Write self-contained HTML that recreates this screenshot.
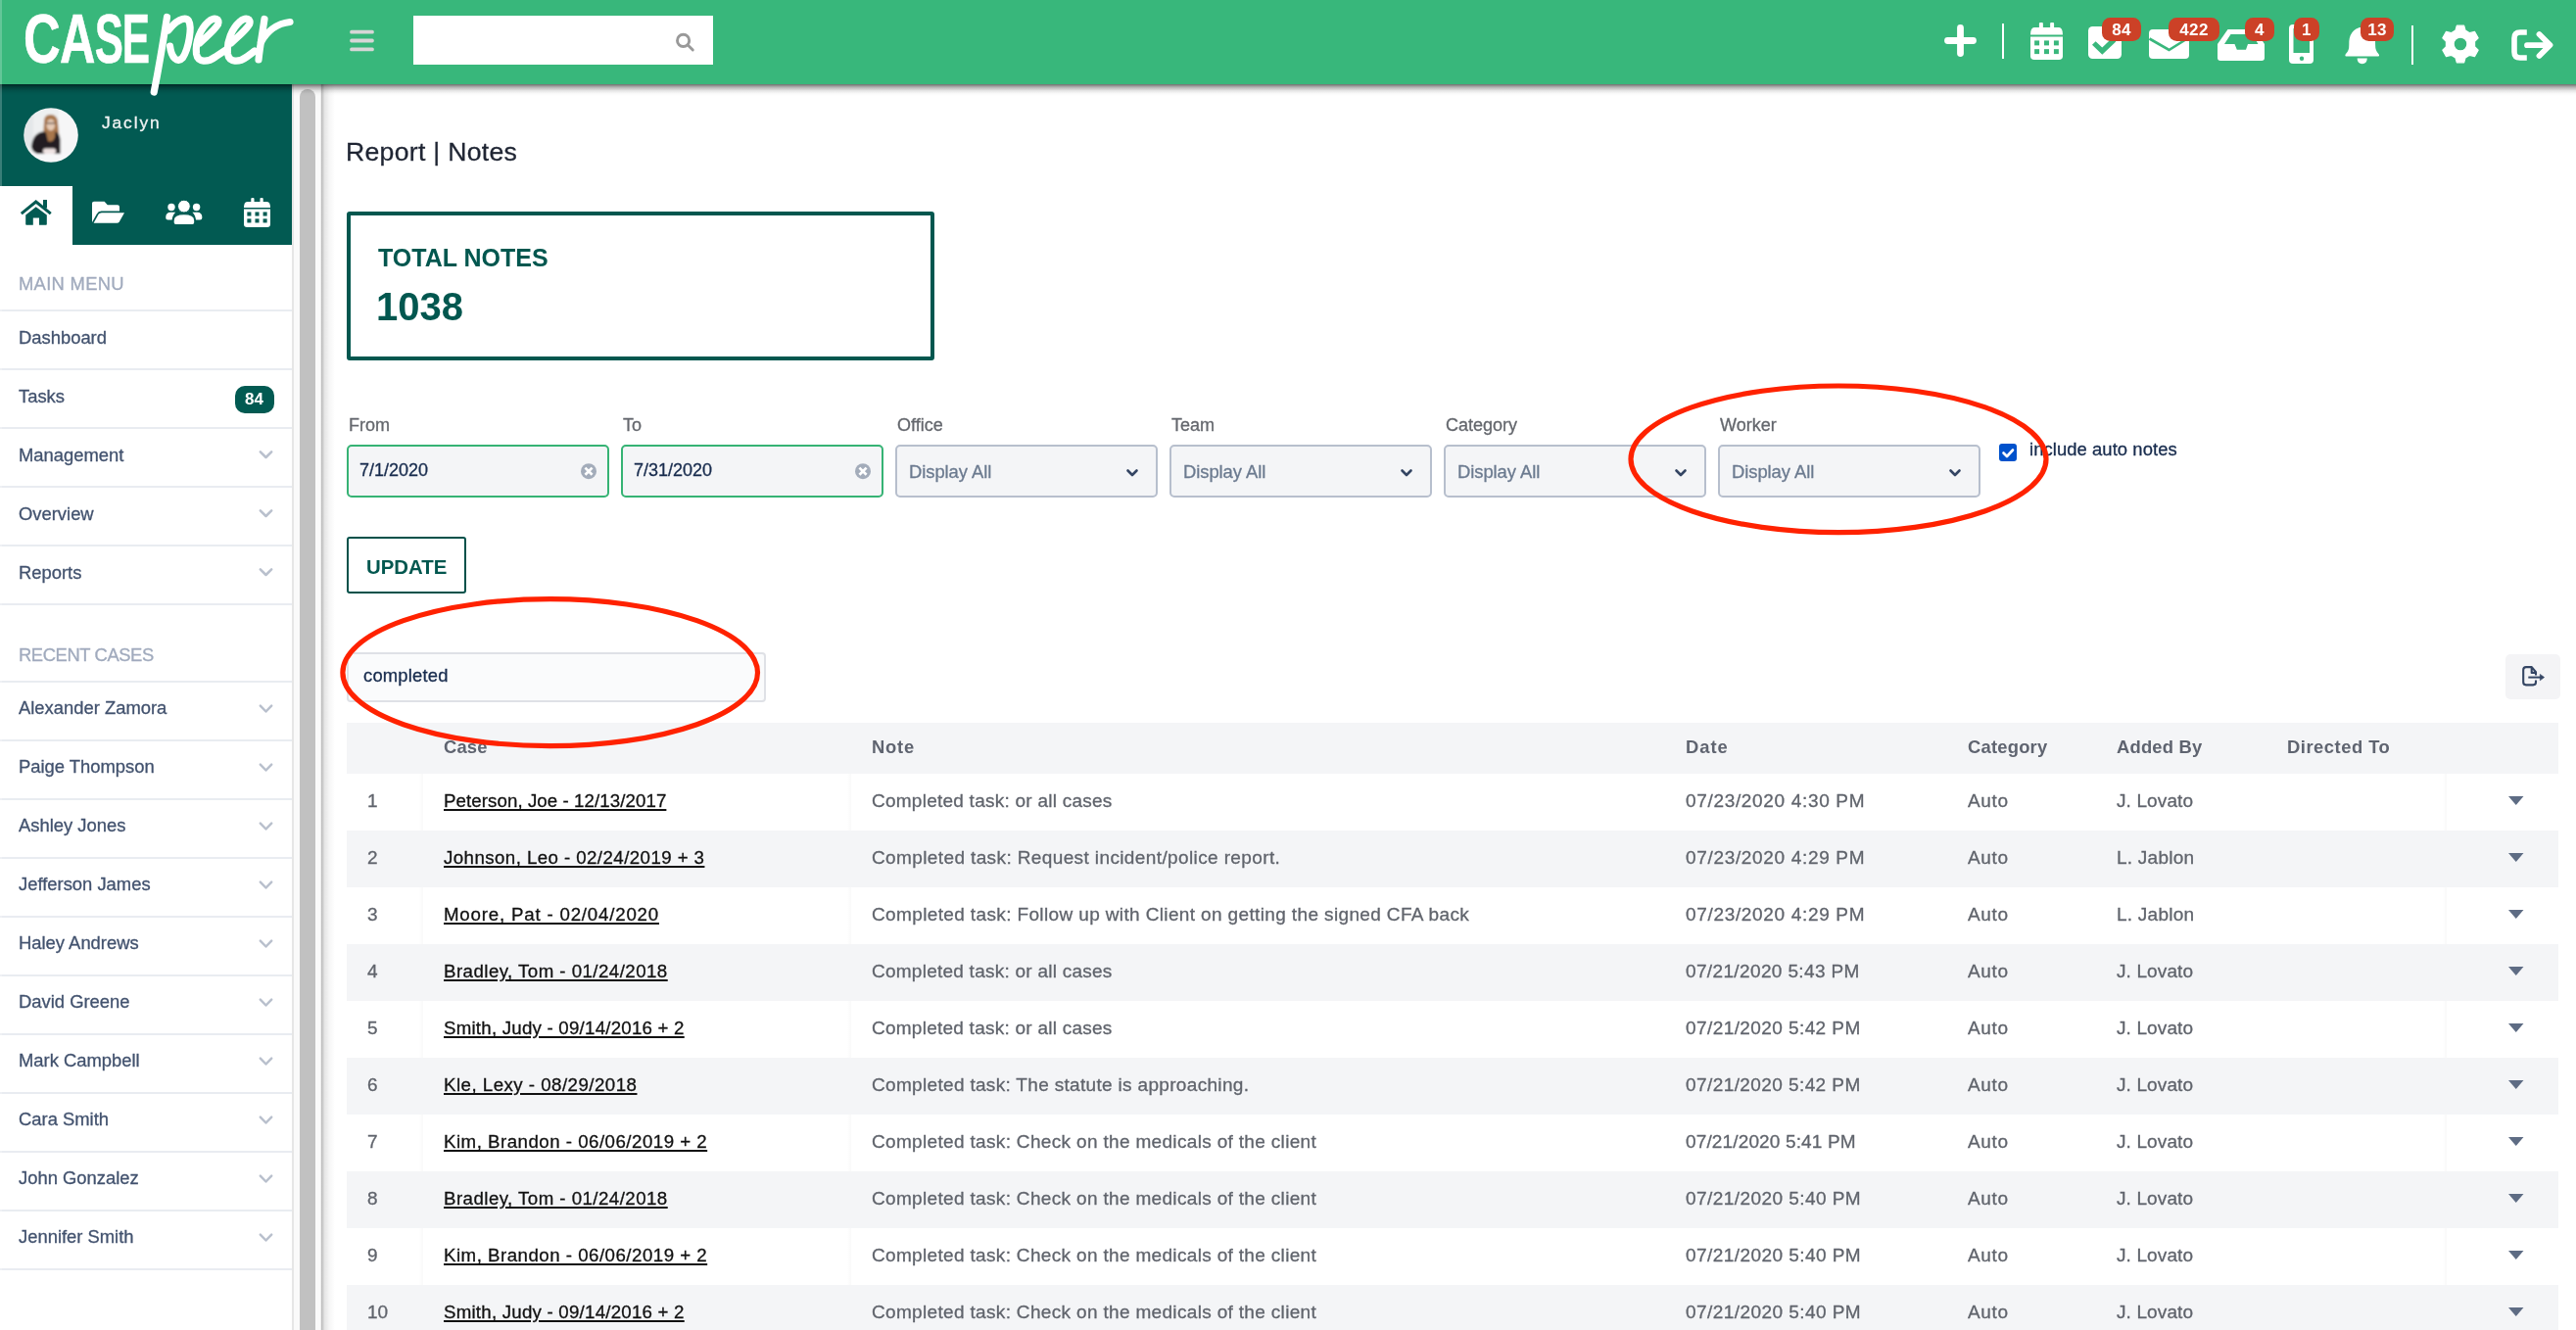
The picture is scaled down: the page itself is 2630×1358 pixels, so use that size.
<!DOCTYPE html><html><head><meta charset="utf-8"><style>
*{margin:0;padding:0;box-sizing:border-box}
html,body{width:2630px;height:1358px;overflow:hidden;background:#fff;font-family:"Liberation Sans",sans-serif}
.t{position:absolute;line-height:1;white-space:nowrap;will-change:transform}
.r{position:absolute}
svg{position:absolute;overflow:visible}
</style></head><body><div class="r" style="left:328px;top:86px;width:2302px;height:1272px;background:#fff"></div>
<div class="r" style="left:328px;top:86px;width:14px;height:1272px;background:linear-gradient(to right,#b9b9b9,#e6e6e6 25%,#f6f6f6 60%,rgba(255,255,255,0))"></div>
<div class="r" style="left:298px;top:86px;width:30px;height:1272px;background:#fafafa;border-left:2px solid #e6e6e6;border-right:1px solid #eeeeee"></div>
<div class="r" style="left:306px;top:91px;width:16px;height:1300px;background:#c1c1c1;border-radius:8px 8px 0 0"></div>
<div class="r" style="left:0px;top:86px;width:298px;height:1272px;background:#fff"></div>
<div class="r" style="left:0px;top:86px;width:298px;height:164px;background:#025a52"></div>
<div class="r" style="left:0px;top:190px;width:74px;height:60px;background:#fff"></div>
<div class="t" style="left:103.8px;top:117.3px;font-size:17.4px;color:#f2f4f4;-webkit-text-stroke:0.3px currentColor;letter-spacing:1.876px;">Jaclyn</div>
<div class="t" style="left:19.4px;top:280.6px;font-size:18.4px;color:#a0aabd;-webkit-text-stroke:0.3px currentColor;letter-spacing:0.293px;">MAIN MENU</div>
<div class="t" style="left:19.0px;top:336.2px;font-size:18.4px;color:#42526e;-webkit-text-stroke:0.3px currentColor;">Dashboard</div>
<div class="t" style="left:19.0px;top:396.2px;font-size:18.4px;color:#42526e;-webkit-text-stroke:0.3px currentColor;">Tasks</div>
<div class="t" style="left:19.0px;top:456.2px;font-size:18.4px;color:#42526e;-webkit-text-stroke:0.3px currentColor;">Management</div>
<div class="t" style="left:19.0px;top:516.2px;font-size:18.4px;color:#42526e;-webkit-text-stroke:0.3px currentColor;">Overview</div>
<div class="t" style="left:19.0px;top:576.2px;font-size:18.4px;color:#42526e;-webkit-text-stroke:0.3px currentColor;">Reports</div>
<div class="r" style="left:0px;top:316px;width:298px;height:2px;background:#e9ecf1"></div>
<div class="r" style="left:0px;top:376px;width:298px;height:2px;background:#e9ecf1"></div>
<div class="r" style="left:0px;top:436px;width:298px;height:2px;background:#e9ecf1"></div>
<div class="r" style="left:0px;top:496px;width:298px;height:2px;background:#e9ecf1"></div>
<div class="r" style="left:0px;top:556px;width:298px;height:2px;background:#e9ecf1"></div>
<div class="r" style="left:0px;top:616px;width:298px;height:2px;background:#e9ecf1"></div>
<div class="r" style="left:240px;top:394px;width:40px;height:28px;background:#025a52;border-radius:10px"></div>
<div class="t" style="left:250.0px;top:398.6px;font-size:17px;color:#ffffff;font-weight:700;">84</div>
<div class="t" style="left:19.4px;top:660.4px;font-size:18.4px;color:#a0aabd;-webkit-text-stroke:0.3px currentColor;letter-spacing:-0.409px;">RECENT CASES</div>
<div class="t" style="left:19.0px;top:714.2px;font-size:18.4px;color:#42526e;-webkit-text-stroke:0.3px currentColor;">Alexander Zamora</div>
<div class="t" style="left:19.0px;top:774.2px;font-size:18.4px;color:#42526e;-webkit-text-stroke:0.3px currentColor;">Paige Thompson</div>
<div class="t" style="left:19.0px;top:834.2px;font-size:18.4px;color:#42526e;-webkit-text-stroke:0.3px currentColor;">Ashley Jones</div>
<div class="t" style="left:19.0px;top:894.2px;font-size:18.4px;color:#42526e;-webkit-text-stroke:0.3px currentColor;">Jefferson James</div>
<div class="t" style="left:19.0px;top:954.2px;font-size:18.4px;color:#42526e;-webkit-text-stroke:0.3px currentColor;">Haley Andrews</div>
<div class="t" style="left:19.0px;top:1014.2px;font-size:18.4px;color:#42526e;-webkit-text-stroke:0.3px currentColor;">David Greene</div>
<div class="t" style="left:19.0px;top:1074.2px;font-size:18.4px;color:#42526e;-webkit-text-stroke:0.3px currentColor;">Mark Campbell</div>
<div class="t" style="left:19.0px;top:1134.2px;font-size:18.4px;color:#42526e;-webkit-text-stroke:0.3px currentColor;">Cara Smith</div>
<div class="t" style="left:19.0px;top:1194.2px;font-size:18.4px;color:#42526e;-webkit-text-stroke:0.3px currentColor;">John Gonzalez</div>
<div class="t" style="left:19.0px;top:1254.2px;font-size:18.4px;color:#42526e;-webkit-text-stroke:0.3px currentColor;">Jennifer Smith</div>
<div class="r" style="left:0px;top:695px;width:298px;height:2px;background:#e9ecf1"></div>
<div class="r" style="left:0px;top:755px;width:298px;height:2px;background:#e9ecf1"></div>
<div class="r" style="left:0px;top:815px;width:298px;height:2px;background:#e9ecf1"></div>
<div class="r" style="left:0px;top:875px;width:298px;height:2px;background:#e9ecf1"></div>
<div class="r" style="left:0px;top:935px;width:298px;height:2px;background:#e9ecf1"></div>
<div class="r" style="left:0px;top:995px;width:298px;height:2px;background:#e9ecf1"></div>
<div class="r" style="left:0px;top:1055px;width:298px;height:2px;background:#e9ecf1"></div>
<div class="r" style="left:0px;top:1115px;width:298px;height:2px;background:#e9ecf1"></div>
<div class="r" style="left:0px;top:1175px;width:298px;height:2px;background:#e9ecf1"></div>
<div class="r" style="left:0px;top:1235px;width:298px;height:2px;background:#e9ecf1"></div>
<div class="r" style="left:0px;top:1295px;width:298px;height:2px;background:#e9ecf1"></div>
<div class="r" style="left:0px;top:0px;width:2630px;height:86px;background:#38b77b"></div>
<div class="r" style="left:0px;top:86px;width:2630px;height:12px;background:linear-gradient(to bottom,rgba(0,0,0,.56),rgba(0,0,0,.3) 25%,rgba(0,0,0,.1) 55%,rgba(0,0,0,.02) 80%,rgba(0,0,0,0))"></div>
<div class="r" style="left:422px;top:16px;width:306px;height:50px;background:#fff"></div>
<div class="t" style="left:353.4px;top:141.9px;font-size:26.6px;color:#1f2533;-webkit-text-stroke:0.3px currentColor;letter-spacing:0.294px;">Report | Notes</div>
<div class="r" style="left:354px;top:216px;width:600px;height:152px;border:4px solid #02574f;border-radius:3px"></div>
<div class="t" style="left:385.5px;top:251.2px;font-size:25px;color:#02574f;font-weight:700;">TOTAL NOTES</div>
<div class="t" style="left:383.5px;top:292.6px;font-size:40px;color:#02574f;font-weight:700;">1038</div>
<div class="t" style="left:355.7px;top:425.1px;font-size:18px;color:#64676d;-webkit-text-stroke:0.3px currentColor;">From</div>
<div class="r" style="left:354px;top:454px;width:268px;height:54px;background:#f4f5f7;border:2px solid #36b374;border-radius:5px"></div>
<div class="t" style="left:367.4px;top:471.1px;font-size:18px;color:#172b4d;-webkit-text-stroke:0.3px currentColor;">7/1/2020</div>
<div class="t" style="left:635.7px;top:425.1px;font-size:18px;color:#64676d;-webkit-text-stroke:0.3px currentColor;">To</div>
<div class="r" style="left:634px;top:454px;width:268px;height:54px;background:#f4f5f7;border:2px solid #36b374;border-radius:5px"></div>
<div class="t" style="left:647.4px;top:471.1px;font-size:18px;color:#172b4d;-webkit-text-stroke:0.3px currentColor;">7/31/2020</div>
<div class="t" style="left:915.7px;top:425.1px;font-size:18px;color:#64676d;-webkit-text-stroke:0.3px currentColor;">Office</div>
<div class="r" style="left:914px;top:454px;width:268px;height:54px;background:#f4f5f7;border:2px solid #b7bfcd;border-radius:5px"></div>
<div class="t" style="left:927.6px;top:472.7px;font-size:18.4px;color:#6b7a8f;-webkit-text-stroke:0.3px currentColor;letter-spacing:-0.056px;">Display All</div>
<div class="t" style="left:1195.7px;top:425.1px;font-size:18px;color:#64676d;-webkit-text-stroke:0.3px currentColor;">Team</div>
<div class="r" style="left:1194px;top:454px;width:268px;height:54px;background:#f4f5f7;border:2px solid #b7bfcd;border-radius:5px"></div>
<div class="t" style="left:1207.6px;top:472.7px;font-size:18.4px;color:#6b7a8f;-webkit-text-stroke:0.3px currentColor;letter-spacing:-0.056px;">Display All</div>
<div class="t" style="left:1475.7px;top:425.1px;font-size:18px;color:#64676d;-webkit-text-stroke:0.3px currentColor;">Category</div>
<div class="r" style="left:1474px;top:454px;width:268px;height:54px;background:#f4f5f7;border:2px solid #b7bfcd;border-radius:5px"></div>
<div class="t" style="left:1487.6px;top:472.7px;font-size:18.4px;color:#6b7a8f;-webkit-text-stroke:0.3px currentColor;letter-spacing:-0.056px;">Display All</div>
<div class="t" style="left:1755.7px;top:425.1px;font-size:18px;color:#64676d;-webkit-text-stroke:0.3px currentColor;">Worker</div>
<div class="r" style="left:1754px;top:454px;width:268px;height:54px;background:#f4f5f7;border:2px solid #b7bfcd;border-radius:5px"></div>
<div class="t" style="left:1767.6px;top:472.7px;font-size:18.4px;color:#6b7a8f;-webkit-text-stroke:0.3px currentColor;letter-spacing:-0.056px;">Display All</div>
<div class="r" style="left:2041px;top:453px;width:18px;height:18px;background:#0052cc;border-radius:3px"></div>
<div class="t" style="left:2072.0px;top:450.4px;font-size:18.4px;color:#172b4d;-webkit-text-stroke:0.3px currentColor;letter-spacing:0.083px;">include auto notes</div>
<div class="r" style="left:354px;top:548px;width:122px;height:58px;border:2px solid #02514a;border-radius:3px"></div>
<div class="t" style="left:373.5px;top:568.7px;font-size:20.4px;color:#02574f;font-weight:700;">UPDATE</div>
<div class="r" style="left:354px;top:666px;width:428px;height:51px;background:#fafbfc;border:2px solid #dfe1e6;border-radius:4px"></div>
<div class="t" style="left:371.2px;top:681.2px;font-size:18.4px;color:#172b4d;-webkit-text-stroke:0.3px currentColor;letter-spacing:0.197px;">completed</div>
<div class="r" style="left:2558px;top:668px;width:56px;height:46px;background:#f4f4f6;border-radius:5px"></div>
<div class="r" style="left:354px;top:738px;width:2258px;height:52px;background:#f4f5f7"></div>
<div class="t" style="left:453.0px;top:754.1px;font-size:18.4px;color:#5f6470;font-weight:700;letter-spacing:0.154px;">Case</div>
<div class="t" style="left:889.7px;top:754.1px;font-size:18.4px;color:#5f6470;font-weight:700;letter-spacing:0.787px;">Note</div>
<div class="t" style="left:1721.0px;top:754.1px;font-size:18.4px;color:#5f6470;font-weight:700;letter-spacing:0.989px;">Date</div>
<div class="t" style="left:2008.7px;top:754.1px;font-size:18.4px;color:#5f6470;font-weight:700;letter-spacing:0.216px;">Category</div>
<div class="t" style="left:2160.8px;top:754.1px;font-size:18.4px;color:#5f6470;font-weight:700;letter-spacing:0.2px;">Added By</div>
<div class="t" style="left:2335.2px;top:754.1px;font-size:18.4px;color:#5f6470;font-weight:700;letter-spacing:0.503px;">Directed To</div>
<div class="r" style="left:428px;top:790px;width:4px;height:58px;background:linear-gradient(to right,rgba(0,0,0,0),rgba(0,0,0,.025))"></div>
<div class="r" style="left:865px;top:790px;width:4px;height:58px;background:linear-gradient(to right,rgba(0,0,0,0),rgba(0,0,0,.025))"></div>
<div class="r" style="left:2494px;top:790px;width:4px;height:58px;background:linear-gradient(to right,rgba(0,0,0,0),rgba(0,0,0,.025))"></div>
<div class="t" style="left:375.0px;top:808.2px;font-size:19px;color:#60646c;-webkit-text-stroke:0.3px currentColor;">1</div>
<div class="t" style="left:453.0px;top:808.5px;font-size:18.7px;color:#111111;-webkit-text-stroke:0.3px currentColor;letter-spacing:0.074px;text-decoration:underline;text-underline-offset:2px;text-decoration-thickness:2px;">Peterson, Joe - 12/13/2017</div>
<div class="t" style="left:889.5px;top:808.2px;font-size:19px;color:#60646c;-webkit-text-stroke:0.3px currentColor;letter-spacing:0.246px;">Completed task: or all cases</div>
<div class="t" style="left:1721.3px;top:808.2px;font-size:19px;color:#60646c;-webkit-text-stroke:0.3px currentColor;letter-spacing:0.67px;">07/23/2020 4:30 PM</div>
<div class="t" style="left:2009.0px;top:808.2px;font-size:19px;color:#60646c;-webkit-text-stroke:0.3px currentColor;letter-spacing:0.66px;">Auto</div>
<div class="t" style="left:2161.0px;top:808.2px;font-size:19px;color:#60646c;-webkit-text-stroke:0.3px currentColor;letter-spacing:0.12px;">J. Lovato</div>
<div class="r" style="left:354px;top:848px;width:2258px;height:58px;background:#f4f5f7"></div>
<div class="t" style="left:375.0px;top:866.2px;font-size:19px;color:#60646c;-webkit-text-stroke:0.3px currentColor;">2</div>
<div class="t" style="left:453.0px;top:866.5px;font-size:18.7px;color:#111111;-webkit-text-stroke:0.3px currentColor;letter-spacing:0.427px;text-decoration:underline;text-underline-offset:2px;text-decoration-thickness:2px;">Johnson, Leo - 02/24/2019 + 3</div>
<div class="t" style="left:889.5px;top:866.2px;font-size:19px;color:#60646c;-webkit-text-stroke:0.3px currentColor;letter-spacing:0.384px;">Completed task: Request incident/police report.</div>
<div class="t" style="left:1721.3px;top:866.2px;font-size:19px;color:#60646c;-webkit-text-stroke:0.3px currentColor;letter-spacing:0.67px;">07/23/2020 4:29 PM</div>
<div class="t" style="left:2009.0px;top:866.2px;font-size:19px;color:#60646c;-webkit-text-stroke:0.3px currentColor;letter-spacing:0.66px;">Auto</div>
<div class="t" style="left:2161.0px;top:866.2px;font-size:19px;color:#60646c;-webkit-text-stroke:0.3px currentColor;letter-spacing:0.244px;">L. Jablon</div>
<div class="r" style="left:428px;top:906px;width:4px;height:58px;background:linear-gradient(to right,rgba(0,0,0,0),rgba(0,0,0,.025))"></div>
<div class="r" style="left:865px;top:906px;width:4px;height:58px;background:linear-gradient(to right,rgba(0,0,0,0),rgba(0,0,0,.025))"></div>
<div class="r" style="left:2494px;top:906px;width:4px;height:58px;background:linear-gradient(to right,rgba(0,0,0,0),rgba(0,0,0,.025))"></div>
<div class="t" style="left:375.0px;top:924.2px;font-size:19px;color:#60646c;-webkit-text-stroke:0.3px currentColor;">3</div>
<div class="t" style="left:453.0px;top:924.5px;font-size:18.7px;color:#111111;-webkit-text-stroke:0.3px currentColor;letter-spacing:0.802px;text-decoration:underline;text-underline-offset:2px;text-decoration-thickness:2px;">Moore, Pat - 02/04/2020</div>
<div class="t" style="left:889.5px;top:924.2px;font-size:19px;color:#60646c;-webkit-text-stroke:0.3px currentColor;letter-spacing:0.368px;">Completed task: Follow up with Client on getting the signed CFA back</div>
<div class="t" style="left:1721.3px;top:924.2px;font-size:19px;color:#60646c;-webkit-text-stroke:0.3px currentColor;letter-spacing:0.67px;">07/23/2020 4:29 PM</div>
<div class="t" style="left:2009.0px;top:924.2px;font-size:19px;color:#60646c;-webkit-text-stroke:0.3px currentColor;letter-spacing:0.66px;">Auto</div>
<div class="t" style="left:2161.0px;top:924.2px;font-size:19px;color:#60646c;-webkit-text-stroke:0.3px currentColor;letter-spacing:0.244px;">L. Jablon</div>
<div class="r" style="left:354px;top:964px;width:2258px;height:58px;background:#f4f5f7"></div>
<div class="t" style="left:375.0px;top:982.2px;font-size:19px;color:#60646c;-webkit-text-stroke:0.3px currentColor;">4</div>
<div class="t" style="left:453.0px;top:982.5px;font-size:18.7px;color:#111111;-webkit-text-stroke:0.3px currentColor;letter-spacing:0.45px;text-decoration:underline;text-underline-offset:2px;text-decoration-thickness:2px;">Bradley, Tom - 01/24/2018</div>
<div class="t" style="left:889.5px;top:982.2px;font-size:19px;color:#60646c;-webkit-text-stroke:0.3px currentColor;letter-spacing:0.246px;">Completed task: or all cases</div>
<div class="t" style="left:1721.3px;top:982.2px;font-size:19px;color:#60646c;-webkit-text-stroke:0.3px currentColor;letter-spacing:0.365px;">07/21/2020 5:43 PM</div>
<div class="t" style="left:2009.0px;top:982.2px;font-size:19px;color:#60646c;-webkit-text-stroke:0.3px currentColor;letter-spacing:0.66px;">Auto</div>
<div class="t" style="left:2161.0px;top:982.2px;font-size:19px;color:#60646c;-webkit-text-stroke:0.3px currentColor;letter-spacing:0.12px;">J. Lovato</div>
<div class="r" style="left:428px;top:1022px;width:4px;height:58px;background:linear-gradient(to right,rgba(0,0,0,0),rgba(0,0,0,.025))"></div>
<div class="r" style="left:865px;top:1022px;width:4px;height:58px;background:linear-gradient(to right,rgba(0,0,0,0),rgba(0,0,0,.025))"></div>
<div class="r" style="left:2494px;top:1022px;width:4px;height:58px;background:linear-gradient(to right,rgba(0,0,0,0),rgba(0,0,0,.025))"></div>
<div class="t" style="left:375.0px;top:1040.2px;font-size:19px;color:#60646c;-webkit-text-stroke:0.3px currentColor;">5</div>
<div class="t" style="left:453.0px;top:1040.5px;font-size:18.7px;color:#111111;-webkit-text-stroke:0.3px currentColor;letter-spacing:0.224px;text-decoration:underline;text-underline-offset:2px;text-decoration-thickness:2px;">Smith, Judy - 09/14/2016 + 2</div>
<div class="t" style="left:889.5px;top:1040.2px;font-size:19px;color:#60646c;-webkit-text-stroke:0.3px currentColor;letter-spacing:0.246px;">Completed task: or all cases</div>
<div class="t" style="left:1721.3px;top:1040.2px;font-size:19px;color:#60646c;-webkit-text-stroke:0.3px currentColor;letter-spacing:0.417px;">07/21/2020 5:42 PM</div>
<div class="t" style="left:2009.0px;top:1040.2px;font-size:19px;color:#60646c;-webkit-text-stroke:0.3px currentColor;letter-spacing:0.66px;">Auto</div>
<div class="t" style="left:2161.0px;top:1040.2px;font-size:19px;color:#60646c;-webkit-text-stroke:0.3px currentColor;letter-spacing:0.12px;">J. Lovato</div>
<div class="r" style="left:354px;top:1080px;width:2258px;height:58px;background:#f4f5f7"></div>
<div class="t" style="left:375.0px;top:1098.2px;font-size:19px;color:#60646c;-webkit-text-stroke:0.3px currentColor;">6</div>
<div class="t" style="left:453.0px;top:1098.5px;font-size:18.7px;color:#111111;-webkit-text-stroke:0.3px currentColor;letter-spacing:0.476px;text-decoration:underline;text-underline-offset:2px;text-decoration-thickness:2px;">Kle, Lexy - 08/29/2018</div>
<div class="t" style="left:889.5px;top:1098.2px;font-size:19px;color:#60646c;-webkit-text-stroke:0.3px currentColor;letter-spacing:0.322px;">Completed task: The statute is approaching.</div>
<div class="t" style="left:1721.3px;top:1098.2px;font-size:19px;color:#60646c;-webkit-text-stroke:0.3px currentColor;letter-spacing:0.417px;">07/21/2020 5:42 PM</div>
<div class="t" style="left:2009.0px;top:1098.2px;font-size:19px;color:#60646c;-webkit-text-stroke:0.3px currentColor;letter-spacing:0.66px;">Auto</div>
<div class="t" style="left:2161.0px;top:1098.2px;font-size:19px;color:#60646c;-webkit-text-stroke:0.3px currentColor;letter-spacing:0.12px;">J. Lovato</div>
<div class="r" style="left:428px;top:1138px;width:4px;height:58px;background:linear-gradient(to right,rgba(0,0,0,0),rgba(0,0,0,.025))"></div>
<div class="r" style="left:865px;top:1138px;width:4px;height:58px;background:linear-gradient(to right,rgba(0,0,0,0),rgba(0,0,0,.025))"></div>
<div class="r" style="left:2494px;top:1138px;width:4px;height:58px;background:linear-gradient(to right,rgba(0,0,0,0),rgba(0,0,0,.025))"></div>
<div class="t" style="left:375.0px;top:1156.2px;font-size:19px;color:#60646c;-webkit-text-stroke:0.3px currentColor;">7</div>
<div class="t" style="left:453.0px;top:1156.5px;font-size:18.7px;color:#111111;-webkit-text-stroke:0.3px currentColor;letter-spacing:0.487px;text-decoration:underline;text-underline-offset:2px;text-decoration-thickness:2px;">Kim, Brandon - 06/06/2019 + 2</div>
<div class="t" style="left:889.5px;top:1156.2px;font-size:19px;color:#60646c;-webkit-text-stroke:0.3px currentColor;letter-spacing:0.331px;">Completed task: Check on the medicals of the client</div>
<div class="t" style="left:1721.3px;top:1156.2px;font-size:19px;color:#60646c;-webkit-text-stroke:0.3px currentColor;letter-spacing:0.141px;">07/21/2020 5:41 PM</div>
<div class="t" style="left:2009.0px;top:1156.2px;font-size:19px;color:#60646c;-webkit-text-stroke:0.3px currentColor;letter-spacing:0.66px;">Auto</div>
<div class="t" style="left:2161.0px;top:1156.2px;font-size:19px;color:#60646c;-webkit-text-stroke:0.3px currentColor;letter-spacing:0.12px;">J. Lovato</div>
<div class="r" style="left:354px;top:1196px;width:2258px;height:58px;background:#f4f5f7"></div>
<div class="t" style="left:375.0px;top:1214.2px;font-size:19px;color:#60646c;-webkit-text-stroke:0.3px currentColor;">8</div>
<div class="t" style="left:453.0px;top:1214.5px;font-size:18.7px;color:#111111;-webkit-text-stroke:0.3px currentColor;letter-spacing:0.45px;text-decoration:underline;text-underline-offset:2px;text-decoration-thickness:2px;">Bradley, Tom - 01/24/2018</div>
<div class="t" style="left:889.5px;top:1214.2px;font-size:19px;color:#60646c;-webkit-text-stroke:0.3px currentColor;letter-spacing:0.331px;">Completed task: Check on the medicals of the client</div>
<div class="t" style="left:1721.3px;top:1214.2px;font-size:19px;color:#60646c;-webkit-text-stroke:0.3px currentColor;letter-spacing:0.441px;">07/21/2020 5:40 PM</div>
<div class="t" style="left:2009.0px;top:1214.2px;font-size:19px;color:#60646c;-webkit-text-stroke:0.3px currentColor;letter-spacing:0.66px;">Auto</div>
<div class="t" style="left:2161.0px;top:1214.2px;font-size:19px;color:#60646c;-webkit-text-stroke:0.3px currentColor;letter-spacing:0.12px;">J. Lovato</div>
<div class="r" style="left:428px;top:1254px;width:4px;height:58px;background:linear-gradient(to right,rgba(0,0,0,0),rgba(0,0,0,.025))"></div>
<div class="r" style="left:865px;top:1254px;width:4px;height:58px;background:linear-gradient(to right,rgba(0,0,0,0),rgba(0,0,0,.025))"></div>
<div class="r" style="left:2494px;top:1254px;width:4px;height:58px;background:linear-gradient(to right,rgba(0,0,0,0),rgba(0,0,0,.025))"></div>
<div class="t" style="left:375.0px;top:1272.2px;font-size:19px;color:#60646c;-webkit-text-stroke:0.3px currentColor;">9</div>
<div class="t" style="left:453.0px;top:1272.5px;font-size:18.7px;color:#111111;-webkit-text-stroke:0.3px currentColor;letter-spacing:0.487px;text-decoration:underline;text-underline-offset:2px;text-decoration-thickness:2px;">Kim, Brandon - 06/06/2019 + 2</div>
<div class="t" style="left:889.5px;top:1272.2px;font-size:19px;color:#60646c;-webkit-text-stroke:0.3px currentColor;letter-spacing:0.331px;">Completed task: Check on the medicals of the client</div>
<div class="t" style="left:1721.3px;top:1272.2px;font-size:19px;color:#60646c;-webkit-text-stroke:0.3px currentColor;letter-spacing:0.441px;">07/21/2020 5:40 PM</div>
<div class="t" style="left:2009.0px;top:1272.2px;font-size:19px;color:#60646c;-webkit-text-stroke:0.3px currentColor;letter-spacing:0.66px;">Auto</div>
<div class="t" style="left:2161.0px;top:1272.2px;font-size:19px;color:#60646c;-webkit-text-stroke:0.3px currentColor;letter-spacing:0.12px;">J. Lovato</div>
<div class="r" style="left:354px;top:1312px;width:2258px;height:58px;background:#f4f5f7"></div>
<div class="t" style="left:375.0px;top:1330.2px;font-size:19px;color:#60646c;-webkit-text-stroke:0.3px currentColor;">10</div>
<div class="t" style="left:453.0px;top:1330.5px;font-size:18.7px;color:#111111;-webkit-text-stroke:0.3px currentColor;letter-spacing:0.224px;text-decoration:underline;text-underline-offset:2px;text-decoration-thickness:2px;">Smith, Judy - 09/14/2016 + 2</div>
<div class="t" style="left:889.5px;top:1330.2px;font-size:19px;color:#60646c;-webkit-text-stroke:0.3px currentColor;letter-spacing:0.331px;">Completed task: Check on the medicals of the client</div>
<div class="t" style="left:1721.3px;top:1330.2px;font-size:19px;color:#60646c;-webkit-text-stroke:0.3px currentColor;letter-spacing:0.441px;">07/21/2020 5:40 PM</div>
<div class="t" style="left:2009.0px;top:1330.2px;font-size:19px;color:#60646c;-webkit-text-stroke:0.3px currentColor;letter-spacing:0.66px;">Auto</div>
<div class="t" style="left:2161.0px;top:1330.2px;font-size:19px;color:#60646c;-webkit-text-stroke:0.3px currentColor;letter-spacing:0.12px;">J. Lovato</div>
<div class="r" style="left:0px;top:0px;width:2px;height:1358px;background:rgba(255,255,255,.22)"></div>
<svg width="2630" height="1358" style="left:0;top:0;position:absolute"><text x="0" y="0" transform="translate(24.1,63.6) scale(0.735,1)" font-family="Liberation Sans" font-weight="700" font-size="71" fill="#fff" stroke="#fff" stroke-width="0.6">C</text><text x="0" y="0" transform="translate(61.05,63.6) scale(0.71,1)" font-family="Liberation Sans" font-weight="700" font-size="71" fill="#fff" stroke="#fff" stroke-width="0.6">A</text><text x="0" y="0" transform="translate(96.64,63.6) scale(0.615,1)" font-family="Liberation Sans" font-weight="700" font-size="71" fill="#fff" stroke="#fff" stroke-width="0.6">S</text><text x="0" y="0" transform="translate(124.75,63.6) scale(0.597,1)" font-family="Liberation Sans" font-weight="700" font-size="71" fill="#fff" stroke="#fff" stroke-width="0.6">E</text><g fill="none" stroke="#fff" stroke-width="7.2" stroke-linecap="round" stroke-linejoin="round"><path d="M170.5 17.5 C167 40 161 75 157.2 94"/><path d="M172 31 C178.5 22 188.5 16 192.5 21 C196.5 28 192.5 50 186.5 59 C181 65 175 59 173.5 47"/><path d="M204 44 C210 38 219 31 222.5 25 C225 19 219 17 213 22 C205 29 199 42 200.5 55 C202 64 212 64 220 58 L232 50"/><path d="M236 44 C242 38 251 31 254.5 25 C257 19 251 17 245 22 C237 29 231 42 232.5 55 C234 64 244 64 252 58 L260 52"/><path d="M270 19.5 C268 33 265 50 264 61"/><path d="M266.5 43 C272 33 282 24 296 22.5"/></g><rect x="357.2" y="30.650000000000002" width="24.6" height="3.9" rx="1.6" fill="#d6d6d6"/><rect x="357.2" y="39.55" width="24.6" height="3.9" rx="1.6" fill="#d6d6d6"/><rect x="357.2" y="48.449999999999996" width="24.6" height="3.9" rx="1.6" fill="#d6d6d6"/><g fill="none" stroke="#999" stroke-width="2.9" stroke-linecap="round"><circle cx="697.6" cy="41.4" r="6.1"/><path d="M702.2 46 L707.3 51"/></g><path d="M2001.5 28.5 V54.5 M1988.5 41.5 H2014.5" stroke="#fff" stroke-width="6.8" stroke-linecap="round"/><rect x="2044" y="24" width="2" height="36" fill="#fff"/><rect x="2462" y="26" width="2" height="40" fill="#fff"/><rect x="2081.91" y="23" width="3.96" height="9.5" rx="1" fill="#ffffff"/><rect x="2093.13" y="23" width="3.96" height="9.5" rx="1" fill="#ffffff"/><path d="M2073 35.54 Q2073 27.94 2076.96 27.94 H2102.04 Q2106 27.94 2106 35.54 V35.54 H2073 Z" fill="#ffffff"/><path d="M2073 37.44 H2106 V57.2 Q2106 61 2102.04 61 H2076.96 Q2073 61 2073 57.2 Z" fill="#ffffff"/><rect x="2077.125" y="41.425000000000004" width="4.95" height="4.95" fill="#39b77c"/><rect x="2077.125" y="50.165" width="4.95" height="4.95" fill="#39b77c"/><rect x="2087.025" y="41.425000000000004" width="4.95" height="4.95" fill="#39b77c"/><rect x="2087.025" y="50.165" width="4.95" height="4.95" fill="#39b77c"/><rect x="2096.925" y="41.425000000000004" width="4.95" height="4.95" fill="#39b77c"/><rect x="2096.925" y="50.165" width="4.95" height="4.95" fill="#39b77c"/><rect x="2132" y="27" width="34" height="33" rx="4.5" fill="#fff"/><path d="M2137.8 44 L2146.3 52.2 L2158.5 40.5" fill="none" stroke="#39b77c" stroke-width="5.2"/><rect x="2194" y="30" width="41" height="30" rx="4" fill="#fff"/><path d="M2194.5 39.5 L2214.5 51 L2233 39.5" fill="none" stroke="#39b77c" stroke-width="2.6"/><path d="M2274.5 30 H2302 L2312 45 V59 Q2312 62 2309 62 H2267 Q2264 62 2264 59 V45 Z" fill="#fff"/><path d="M2277.5 35 H2299.5 L2305.5 45 H2295 L2293 50.8 H2283.8 L2281.5 45 H2271 Z" fill="#39b77c"/><rect x="2337" y="25" width="25" height="40" rx="4" fill="#fff"/><rect x="2341.5" y="29" width="16.5" height="25" fill="#39b77c"/><circle cx="2350" cy="59.8" r="2.2" fill="#39b77c"/><path d="M2411.7 27.5 Q2397.5 30 2398.3 46 Q2398.5 52 2394.8 55.2 Q2393.5 57.6 2396 57.6 H2427.4 Q2429.9 57.6 2428.6 55.2 Q2425 52 2425.1 46 Q2425.9 30 2411.7 27.5 Z" fill="#fff"/><path d="M2406.6 59.6 H2416.8 Q2416.6 65.3 2411.7 65.3 Q2406.8 65.3 2406.6 59.6 Z" fill="#fff"/><path d="M2506.94,31.09 L2508.34,26.15 L2515.66,26.15 L2517.06,31.09 L2521.51,33.66 L2526.49,32.40 L2530.15,38.75 L2526.58,42.43 L2526.58,47.57 L2530.15,51.25 L2526.49,57.60 L2521.51,56.34 L2517.06,58.91 L2515.66,63.85 L2508.34,63.85 L2506.94,58.91 L2502.49,56.34 L2497.51,57.60 L2493.85,51.25 L2497.42,47.57 L2497.42,42.43 L2493.85,38.75 L2497.51,32.40 L2502.49,33.66 Z M2518.9 45 A6.9 6.9 0 1 0 2505.1 45 A6.9 6.9 0 1 0 2518.9 45 Z" fill="#fff" fill-rule="evenodd" stroke="#fff" stroke-width="1.2" stroke-linejoin="round"/><path d="M2577 33 H2573 Q2567 33 2567 39 V53 Q2567 59 2573 59 H2577" fill="none" stroke="#fff" stroke-width="5.6" stroke-linecap="square"/><path d="M2580 46.2 H2602 M2592.5 35 L2603.5 46 L2592.5 57" fill="none" stroke="#fff" stroke-width="5.8" stroke-linecap="round" stroke-linejoin="round"/><rect x="2146" y="18" width="40" height="24" rx="8.5" fill="#cc4127"/><text x="2166.0" y="36" text-anchor="middle" font-family="Liberation Sans" font-size="17" font-weight="700" fill="#fff" letter-spacing="0.4">84</text><rect x="2214" y="18" width="52" height="24" rx="8.5" fill="#cc4127"/><text x="2240.0" y="36" text-anchor="middle" font-family="Liberation Sans" font-size="17" font-weight="700" fill="#fff" letter-spacing="0.4">422</text><rect x="2292" y="18" width="30" height="24" rx="8.5" fill="#cc4127"/><text x="2307.0" y="36" text-anchor="middle" font-family="Liberation Sans" font-size="17" font-weight="700" fill="#fff" letter-spacing="0.4">4</text><rect x="2342" y="18" width="26" height="24" rx="8.5" fill="#cc4127"/><text x="2355.0" y="36" text-anchor="middle" font-family="Liberation Sans" font-size="17" font-weight="700" fill="#fff" letter-spacing="0.4">1</text><rect x="2410" y="18" width="34" height="24" rx="8.5" fill="#cc4127"/><text x="2427.0" y="36" text-anchor="middle" font-family="Liberation Sans" font-size="17" font-weight="700" fill="#fff" letter-spacing="0.4">13</text><path d="M21.8 218.2 L36.7 206 L51.8 218.2" fill="none" stroke="#025a52" stroke-width="3"/><rect x="44" y="204" width="4" height="8.5" fill="#025a52"/><path d="M26.2 219.4 L36.7 211.2 L47.8 219.4 V229 Q47.8 229.8 47 229.8 H40 V222.4 H33.8 V229.8 H27 Q26.2 229.8 26.2 229 Z" fill="#025a52"/><path d="M94 207.6 Q94 205.7 96 205.7 H106.6 L109.8 209.3 H120 Q122 209.3 122 211.3 V215.6 H103.5 Q100.3 215.6 98.8 218.4 L94 227 Z" fill="#fff"/><path d="M95.6 227.8 L100.6 218.7 Q101.6 217.2 103.8 217.2 H127 L121.8 226.4 Q121 227.8 119.2 227.8 Z" fill="#fff"/><circle cx="175" cy="211.5" r="3.7" fill="#fff"/><circle cx="200.6" cy="211.5" r="3.7" fill="#fff"/><path d="M169.2 222.3 Q169.2 216.8 174.2 216.8 H179.2 Q176.3 219.2 175.6 224.6 H171.5 Q169.2 224.6 169.2 222.3 Z" fill="#fff"/><path d="M206.4 222.3 Q206.4 216.8 201.4 216.8 H196.4 Q199.3 219.2 200 224.6 H204.1 Q206.4 224.6 206.4 222.3 Z" fill="#fff"/><path d="M177 229.8 V225.2 Q177 218.6 187.9 218.6 Q198.9 218.6 198.9 225.2 V227.3 Q198.9 229.8 196.4 229.8 H179.5 Q177 229.8 177 227.3 Z" fill="#fff" stroke="#025a52" stroke-width="1.4"/><circle cx="187.9" cy="210.6" r="6.4" fill="#fff" stroke="#025a52" stroke-width="1"/><rect x="256.29" y="202" width="3.2399999999999998" height="7.5" rx="1" fill="#fff"/><rect x="265.47" y="202" width="3.2399999999999998" height="7.5" rx="1" fill="#fff"/><path d="M249 211.9 Q249 205.9 252.24 205.9 H272.76 Q276 205.9 276 211.9 V211.9 H249 Z" fill="#fff"/><path d="M249 213.4 H276 V229.0 Q276 232 272.76 232 H252.24 Q249 232 249 229.0 Z" fill="#fff"/><rect x="252.375" y="216.475" width="4.05" height="4.05" fill="#025a52"/><rect x="252.375" y="223.375" width="4.05" height="4.05" fill="#025a52"/><rect x="260.475" y="216.475" width="4.05" height="4.05" fill="#025a52"/><rect x="260.475" y="223.375" width="4.05" height="4.05" fill="#025a52"/><rect x="268.57500000000005" y="216.475" width="4.05" height="4.05" fill="#025a52"/><rect x="268.57500000000005" y="223.375" width="4.05" height="4.05" fill="#025a52"/><defs><clipPath id="av"><circle cx="52" cy="138" r="27.8"/></clipPath><filter id="avb" x="-10%" y="-10%" width="120%" height="120%"><feGaussianBlur stdDeviation="1.0"/></filter></defs><g clip-path="url(#av)"><g filter="url(#avb)"><rect x="20" y="106" width="64" height="64" fill="#eef0f1"/><rect x="60" y="110" width="20" height="56" fill="#f6f6f7"/><rect x="24" y="110" width="10" height="40" fill="#e4e7e9"/><rect x="24" y="156" width="56" height="10" fill="#f7f7f9"/><path d="M45 124 Q45 117 51.5 117 Q58.5 117 59 125 L61 146 Q55 149 50 146 Q46 146 44 142 Z" fill="#a8764c"/><ellipse cx="51.8" cy="127.5" rx="4.3" ry="6" fill="#e6cab5"/><path d="M47.3 125.8 H56.3" stroke="#3a2b26" stroke-width="1.1"/><path d="M32 150 Q33 139 40 135.5 Q44 134 47 135 L49 144 Q54 146 56 140 L56.5 134.5 Q61 136 61.5 142 L61.5 157 H38 Q33 155 32 150 Z" fill="#231f22"/><rect x="44" y="151.5" width="13" height="5.5" rx="2.5" fill="#efe3e3"/></g></g><path d="M265.8 461.4 L271.5 467.0 L277.2 461.4" fill="none" stroke="#b9c0cd" stroke-width="2.5" stroke-linecap="round" stroke-linejoin="round"/><path d="M265.8 521.4 L271.5 527.0 L277.2 521.4" fill="none" stroke="#b9c0cd" stroke-width="2.5" stroke-linecap="round" stroke-linejoin="round"/><path d="M265.8 581.4 L271.5 587.0 L277.2 581.4" fill="none" stroke="#b9c0cd" stroke-width="2.5" stroke-linecap="round" stroke-linejoin="round"/><path d="M265.8 720.6 L271.5 726.5 L277.2 720.6" fill="none" stroke="#b9c0cd" stroke-width="2.5" stroke-linecap="round" stroke-linejoin="round"/><path d="M265.8 780.6 L271.5 786.5 L277.2 780.6" fill="none" stroke="#b9c0cd" stroke-width="2.5" stroke-linecap="round" stroke-linejoin="round"/><path d="M265.8 840.6 L271.5 846.5 L277.2 840.6" fill="none" stroke="#b9c0cd" stroke-width="2.5" stroke-linecap="round" stroke-linejoin="round"/><path d="M265.8 900.6 L271.5 906.5 L277.2 900.6" fill="none" stroke="#b9c0cd" stroke-width="2.5" stroke-linecap="round" stroke-linejoin="round"/><path d="M265.8 960.6 L271.5 966.5 L277.2 960.6" fill="none" stroke="#b9c0cd" stroke-width="2.5" stroke-linecap="round" stroke-linejoin="round"/><path d="M265.8 1020.6 L271.5 1026.5 L277.2 1020.6" fill="none" stroke="#b9c0cd" stroke-width="2.5" stroke-linecap="round" stroke-linejoin="round"/><path d="M265.8 1080.6 L271.5 1086.5 L277.2 1080.6" fill="none" stroke="#b9c0cd" stroke-width="2.5" stroke-linecap="round" stroke-linejoin="round"/><path d="M265.8 1140.6 L271.5 1146.5 L277.2 1140.6" fill="none" stroke="#b9c0cd" stroke-width="2.5" stroke-linecap="round" stroke-linejoin="round"/><path d="M265.8 1200.6 L271.5 1206.5 L277.2 1200.6" fill="none" stroke="#b9c0cd" stroke-width="2.5" stroke-linecap="round" stroke-linejoin="round"/><path d="M265.8 1260.6 L271.5 1266.5 L277.2 1260.6" fill="none" stroke="#b9c0cd" stroke-width="2.5" stroke-linecap="round" stroke-linejoin="round"/><circle cx="601" cy="481.2" r="8" fill="#a3acba"/><path d="M598.4 478.6 L603.6 483.8 M603.6 478.6 L598.4 483.8" stroke="#ffffff" stroke-width="2.7" stroke-linecap="square"/><circle cx="881" cy="481.2" r="8" fill="#a3acba"/><path d="M878.4 478.6 L883.6 483.8 M883.6 478.6 L878.4 483.8" stroke="#ffffff" stroke-width="2.7" stroke-linecap="square"/><path d="M1151.5 480.5 L1156 485 L1160.5 480.5" fill="none" stroke="#344563" stroke-width="2.6" stroke-linecap="round" stroke-linejoin="round"/><path d="M1431.5 480.5 L1436 485 L1440.5 480.5" fill="none" stroke="#344563" stroke-width="2.6" stroke-linecap="round" stroke-linejoin="round"/><path d="M1711.5 480.5 L1716 485 L1720.5 480.5" fill="none" stroke="#344563" stroke-width="2.6" stroke-linecap="round" stroke-linejoin="round"/><path d="M1991.5 480.5 L1996 485 L2000.5 480.5" fill="none" stroke="#344563" stroke-width="2.6" stroke-linecap="round" stroke-linejoin="round"/><path d="M2045.5 462.5 L2049 466 L2055 459.5" fill="none" stroke="#fff" stroke-width="2.6" stroke-linecap="round" stroke-linejoin="round"/><path d="M2589 689.4 V686.2 L2584.8 681.1 H2579 Q2576.2 681.1 2576.2 684 V696.6 Q2576.2 699.4 2579 699.4 H2586.2 Q2589 699.4 2589 696.6 V694.6 M2584.7 681.4 V686.9 H2589" fill="none" stroke="#344563" stroke-width="2.1" stroke-linejoin="round"/><path d="M2581.3 691.6 H2594.5" stroke="#344563" stroke-width="2"/><path d="M2593.3 688.4 L2597.6 691.6 L2593.3 694.8 Z" fill="#344563" stroke="#344563" stroke-width="0.6" stroke-linejoin="round"/><path d="M2561 813 H2576.5 L2568.75 822 Z" fill="#5e6c84"/><path d="M2561 871 H2576.5 L2568.75 880 Z" fill="#5e6c84"/><path d="M2561 929 H2576.5 L2568.75 938 Z" fill="#5e6c84"/><path d="M2561 987 H2576.5 L2568.75 996 Z" fill="#5e6c84"/><path d="M2561 1045 H2576.5 L2568.75 1054 Z" fill="#5e6c84"/><path d="M2561 1103 H2576.5 L2568.75 1112 Z" fill="#5e6c84"/><path d="M2561 1161 H2576.5 L2568.75 1170 Z" fill="#5e6c84"/><path d="M2561 1219 H2576.5 L2568.75 1228 Z" fill="#5e6c84"/><path d="M2561 1277 H2576.5 L2568.75 1286 Z" fill="#5e6c84"/><path d="M2561 1335 H2576.5 L2568.75 1344 Z" fill="#5e6c84"/><ellipse cx="1877" cy="468.8" rx="212" ry="74.8" fill="none" stroke="#ff2200" stroke-width="5.2"/><ellipse cx="561.7" cy="686.7" rx="211.8" ry="75" fill="none" stroke="#ff2200" stroke-width="5.2"/></svg></body></html>
